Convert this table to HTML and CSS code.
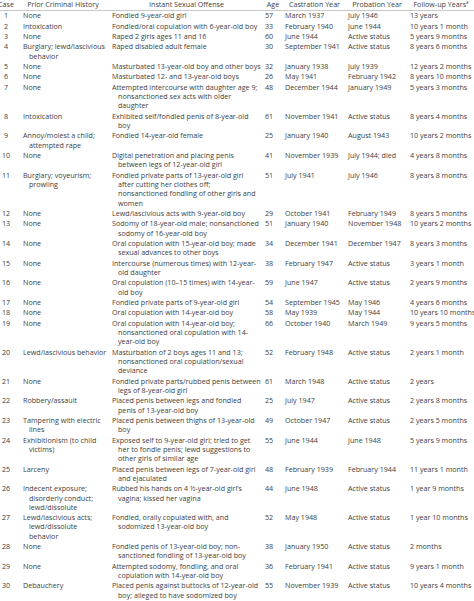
FILE: index.html
```html
<!DOCTYPE html>
<html>
<head>
<meta charset="utf-8">
<link rel="stylesheet" href="styles.css">
</head>
<body>
<table class="tbl">
<colgroup>
<col class="w-case"><col class="w-prior"><col class="w-off"><col class="w-age"><col class="w-cast"><col class="w-prob"><col class="w-fu">
</colgroup>
<thead>
<tr><th>Case</th><th>Prior Criminal History</th><th>Instant Sexual Offense</th><th>Age</th><th>Castration Year</th><th>Probation Year</th><th>Follow-up Years<sup>a</sup></th></tr>
</thead>
<tbody>
<tr><td class="n">1</td><td class="p"><div class="h">None</div></td><td class="o"><div class="h">Fondled 9-year-old girl</div></td><td class="d">57</td><td class="d">March 1937</td><td class="d">July 1946</td><td class="d">13 years</td></tr>
<tr><td class="n">2</td><td class="p"><div class="h">Intoxication</div></td><td class="o"><div class="h">Fondled/oral copulation with 6-year-old boy</div></td><td class="d">33</td><td class="d">February 1940</td><td class="d">June 1944</td><td class="d">10 years 1 month</td></tr>
<tr><td class="n">3</td><td class="p"><div class="h">None</div></td><td class="o"><div class="h">Raped 2 girls ages 11 and 16</div></td><td class="d">60</td><td class="d">June 1944</td><td class="d">Active status</td><td class="d">5 years 9 months</td></tr>
<tr><td class="n">4</td><td class="p"><div class="h">Burglary; lewd/lascivious<br>behavior</div></td><td class="o"><div class="h">Raped disabled adult female</div></td><td class="d">30</td><td class="d">September 1941</td><td class="d">Active status</td><td class="d">8 years 6 months</td></tr>
<tr><td class="n">5</td><td class="p"><div class="h">None</div></td><td class="o"><div class="h">Masturbated 13-year-old boy and other boys</div></td><td class="d">32</td><td class="d">January 1938</td><td class="d">July 1939</td><td class="d">12 years 2 months</td></tr>
<tr><td class="n">6</td><td class="p"><div class="h">None</div></td><td class="o"><div class="h">Masturbated 12- and 13-year-old boys</div></td><td class="d">26</td><td class="d">May 1941</td><td class="d">February 1942</td><td class="d">8 years 10 months</td></tr>
<tr><td class="n">7</td><td class="p"><div class="h">None</div></td><td class="o"><div class="h">Attempted intercourse with daughter age 9;<br>nonsanctioned sex acts with older<br>daughter</div></td><td class="d">48</td><td class="d">December 1944</td><td class="d">January 1949</td><td class="d">5 years 3 months</td></tr>
<tr><td class="n">8</td><td class="p"><div class="h">Intoxication</div></td><td class="o"><div class="h">Exhibited self/fondled penis of 8-year-old<br>boy</div></td><td class="d">61</td><td class="d">November 1941</td><td class="d">Active status</td><td class="d">8 years 4 months</td></tr>
<tr><td class="n">9</td><td class="p"><div class="h">Annoy/molest a child;<br>attempted rape</div></td><td class="o"><div class="h">Fondled 14-year-old female</div></td><td class="d">25</td><td class="d">January 1940</td><td class="d">August 1943</td><td class="d">10 years 2 months</td></tr>
<tr><td class="n">10</td><td class="p"><div class="h">None</div></td><td class="o"><div class="h">Digital penetration and placing penis<br>between legs of 12-year-old girl</div></td><td class="d">41</td><td class="d">November 1939</td><td class="d">July 1944; died</td><td class="d">4 years 8 months</td></tr>
<tr><td class="n">11</td><td class="p"><div class="h">Burglary; voyeurism;<br>prowling</div></td><td class="o"><div class="h">Fondled private parts of 13-year-old girl<br>after cutting her clothes off;<br>nonsanctioned fondling of other girls and<br>women</div></td><td class="d">51</td><td class="d">July 1941</td><td class="d">July 1946</td><td class="d">8 years 8 months</td></tr>
<tr><td class="n">12</td><td class="p"><div class="h">None</div></td><td class="o"><div class="h">Lewd/lascivious acts with 9-year-old boy</div></td><td class="d">29</td><td class="d">October 1941</td><td class="d">February 1949</td><td class="d">8 years 5 months</td></tr>
<tr><td class="n">13</td><td class="p"><div class="h">None</div></td><td class="o"><div class="h">Sodomy of 18-year-old male; nonsanctioned<br>sodomy of 16-year-old boy</div></td><td class="d">51</td><td class="d">January 1940</td><td class="d">November 1948</td><td class="d">10 years 2 months</td></tr>
<tr><td class="n">14</td><td class="p"><div class="h">None</div></td><td class="o"><div class="h">Oral copulation with 15-year-old boy; made<br>sexual advances to other boys</div></td><td class="d">34</td><td class="d">December 1941</td><td class="d">December 1947</td><td class="d">8 years 3 months</td></tr>
<tr><td class="n">15</td><td class="p"><div class="h">None</div></td><td class="o"><div class="h">Intercourse (numerous times) with 12-year-<br>old daughter</div></td><td class="d">38</td><td class="d">February 1947</td><td class="d">Active status</td><td class="d">3 years 1 month</td></tr>
<tr><td class="n">16</td><td class="p"><div class="h">None</div></td><td class="o"><div class="h">Oral copulation (10–15 times) with 14-year-<br>old boy</div></td><td class="d">59</td><td class="d">June 1947</td><td class="d">Active status</td><td class="d">2 years 9 months</td></tr>
<tr><td class="n">17</td><td class="p"><div class="h">None</div></td><td class="o"><div class="h">Fondled private parts of 9-year-old girl</div></td><td class="d">54</td><td class="d">September 1945</td><td class="d">May 1946</td><td class="d">4 years 6 months</td></tr>
<tr><td class="n">18</td><td class="p"><div class="h">None</div></td><td class="o"><div class="h">Oral copulation with 14-year-old boy</div></td><td class="d">58</td><td class="d">May 1939</td><td class="d">May 1944</td><td class="d">10 years 10 months</td></tr>
<tr><td class="n">19</td><td class="p"><div class="h">None</div></td><td class="o"><div class="h">Oral copulation with 14-year-old boy;<br>nonsanctioned oral copulation with 14-<br>year-old boy</div></td><td class="d">66</td><td class="d">October 1940</td><td class="d">March 1949</td><td class="d">9 years 5 months</td></tr>
<tr><td class="n">20</td><td class="p"><div class="h">Lewd/lascivious behavior</div></td><td class="o"><div class="h">Masturbation of 2 boys ages 11 and 13;<br>nonsanctioned oral copulation/sexual<br>deviance</div></td><td class="d">52</td><td class="d">February 1948</td><td class="d">Active status</td><td class="d">2 years 1 month</td></tr>
<tr><td class="n">21</td><td class="p"><div class="h">None</div></td><td class="o"><div class="h">Fondled private parts/rubbed penis between<br>legs of 8-year-old girl</div></td><td class="d">61</td><td class="d">March 1948</td><td class="d">Active status</td><td class="d">2 years</td></tr>
<tr><td class="n">22</td><td class="p"><div class="h">Robbery/assault</div></td><td class="o"><div class="h">Placed penis between legs and fondled<br>penis of 13-year-old boy</div></td><td class="d">25</td><td class="d">July 1947</td><td class="d">Active status</td><td class="d">2 years 8 months</td></tr>
<tr><td class="n">23</td><td class="p"><div class="h">Tampering with electric<br>lines</div></td><td class="o"><div class="h">Placed penis between thighs of 13-year-old<br>boy</div></td><td class="d">49</td><td class="d">October 1947</td><td class="d">Active status</td><td class="d">2 years 5 months</td></tr>
<tr><td class="n">24</td><td class="p"><div class="h">Exhibitionism (to child<br>victims)</div></td><td class="o"><div class="h">Exposed self to 9-year-old girl; tried to get<br>her to fondle penis; lewd suggestions to<br>other girls of similar age</div></td><td class="d">55</td><td class="d">June 1944</td><td class="d">June 1948</td><td class="d">5 years 9 months</td></tr>
<tr><td class="n">25</td><td class="p"><div class="h">Larceny</div></td><td class="o"><div class="h">Placed penis between legs of 7-year-old girl<br>and ejaculated</div></td><td class="d">48</td><td class="d">February 1939</td><td class="d">February 1944</td><td class="d">11 years 1 month</td></tr>
<tr><td class="n">26</td><td class="p"><div class="h">Indecent exposure;<br>disorderly conduct;<br>lewd/dissolute</div></td><td class="o"><div class="h">Rubbed his hands on 4 ½-year-old girl’s<br>vagina; kissed her vagina</div></td><td class="d">44</td><td class="d">June 1948</td><td class="d">Active status</td><td class="d">1 year 9 months</td></tr>
<tr><td class="n">27</td><td class="p"><div class="h">Lewd/lascivious acts;<br>lewd/dissolute<br>behavior</div></td><td class="o"><div class="h">Fondled, orally copulated with, and<br>sodomized 13-year-old boy</div></td><td class="d">52</td><td class="d">May 1948</td><td class="d">Active status</td><td class="d">1 year 10 months</td></tr>
<tr><td class="n">28</td><td class="p"><div class="h">None</div></td><td class="o"><div class="h">Fondled penis of 13-year-old boy; non-<br>sanctioned fondling of 13-year-old boy</div></td><td class="d">38</td><td class="d">January 1950</td><td class="d">Active status</td><td class="d">2 months</td></tr>
<tr><td class="n">29</td><td class="p"><div class="h">None</div></td><td class="o"><div class="h">Attempted sodomy, fondling, and oral<br>copulation with 14-year-old boy</div></td><td class="d">36</td><td class="d">February 1941</td><td class="d">Active status</td><td class="d">9 years 1 month</td></tr>
<tr><td class="n">30</td><td class="p"><div class="h">Debauchery</div></td><td class="o"><div class="h">Placed penis against buttocks of 12-year-old<br>boy; alleged to have sodomized boy</div></td><td class="d">55</td><td class="d">November 1939</td><td class="d">Active status</td><td class="d">10 years 4 months</td></tr>
</tbody>
</table>
</body>
</html>
```
FILE: styles.css
```css
html, body {
  margin: 0;
  padding: 0;
  background: #ffffff;
  overflow: hidden;
}
body {
  font-family: "Open Sans", "Noto Sans", sans-serif;
  font-size: 7.15px;
  color: #3e3e3e;
}
.tbl {
  border-collapse: collapse;
  table-layout: fixed;
  width: 478px;
  margin-left: -4px;
}
.w-case { width: 20px; }
.w-prior { width: 94px; }
.w-off { width: 153px; }
.w-age { width: 20px; }
.w-cast { width: 63px; }
.w-prob { width: 62px; }
.w-fu { width: 66px; }
.tbl th {
  font-weight: normal;
  text-align: center;
  line-height: 9.33px;
  padding: 0 0 0.6px 0;
  border-bottom: 1px solid #c9c9c9;
  white-space: nowrap;
}
.tbl th sup {
  font-size: 4.5px;
  line-height: 0;
  vertical-align: 3px;
}
.tbl td {
  line-height: 9.33px;
  padding: 0.5px 0;
  vertical-align: top;
  white-space: nowrap;
}
.tbl td.n { text-align: center; }
.tbl td.p { padding-left: 7px; }
.tbl td.o { padding-left: 2px; }
.tbl td.d { padding-left: 2px; }
.h {
  padding-left: 6px;
  text-indent: -6px;
}
```
